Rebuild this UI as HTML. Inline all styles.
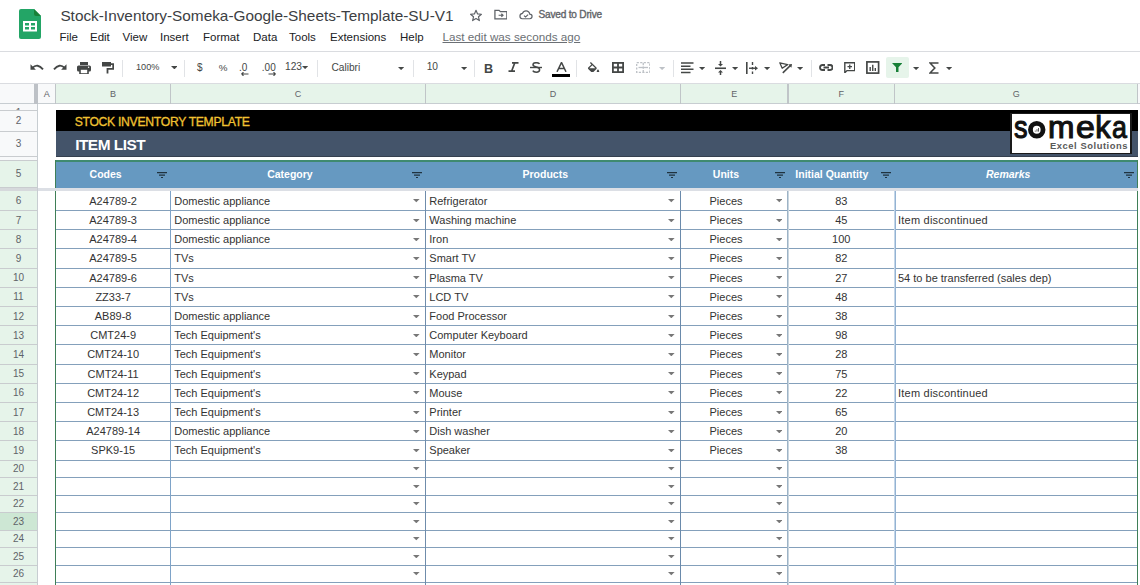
<!DOCTYPE html><html><head><meta charset="utf-8"><style>html,body{margin:0;padding:0;width:1140px;height:585px;overflow:hidden;background:#fff;font-family:"Liberation Sans", sans-serif;}</style></head><body>
<svg style="position:absolute;left:19px;top:9px" width="22" height="30" viewBox="0 0 22 30">
<path d="M2 0 H15 L22 7 V28 Q22 30 20 30 H2 Q0 30 0 28 V2 Q0 0 2 0Z" fill="#23a566"/>
<path d="M15 0 L22 7 H17 Q15 7 15 5Z" fill="#188038"/>
<rect x="4" y="12" width="14" height="10.5" fill="#fff"/>
<rect x="6" y="14" width="4" height="2.5" fill="#23a566"/><rect x="12" y="14" width="4" height="2.5" fill="#23a566"/>
<rect x="6" y="18" width="4" height="2.5" fill="#23a566"/><rect x="12" y="18" width="4" height="2.5" fill="#23a566"/>
</svg>
<div style="position:absolute;left:60.40px;top:7.10px;font-size:15.35px;line-height:17.65px;color:#3c4043;font-weight:normal;font-style:normal;white-space:pre;">Stock-Inventory-Someka-Google-Sheets-Template-SU-V1</div>
<svg style="position:absolute;left:469px;top:9px" width="14" height="13" viewBox="0 0 24 24"><path d="M12 2.5l2.9 6.6 7.1.6-5.4 4.7 1.6 7-6.2-3.7-6.2 3.7 1.6-7L2 9.7l7.1-.6z" fill="none" stroke="#5f6368" stroke-width="2.2" stroke-linejoin="round"/></svg>
<svg style="position:absolute;left:493.6px;top:9.4px" width="13.8" height="10.7" viewBox="0 0 15 12" preserveAspectRatio="none"><path d="M1 1.5 H5.5 L7 3 H14 V11 H1Z" fill="none" stroke="#5f6368" stroke-width="1.4"/><path d="M5 7 H9.5 M8 5.3 L9.8 7 L8 8.7" fill="none" stroke="#5f6368" stroke-width="1.3"/></svg>
<svg style="position:absolute;left:519px;top:10.3px" width="14" height="9.6" viewBox="0 0 15 11" preserveAspectRatio="none"><path d="M3.5 10 H11.5 Q14 10 14 7.3 Q14 5 11.5 4.8 Q10.8 1 7.5 1 Q4.8 1 3.8 3.8 Q1 4.1 1 6.9 Q1 10 3.5 10Z" fill="none" stroke="#5f6368" stroke-width="1.3"/><path d="M5.3 6.5 L7 8 L9.8 5.2" fill="none" stroke="#5f6368" stroke-width="1.2"/></svg>
<div style="position:absolute;left:538.50px;top:8.95px;font-size:10.1px;line-height:11.61px;color:#5f6368;font-weight:normal;font-style:normal;white-space:pre;-webkit-text-stroke:0.35px #5f6368;letter-spacing:-0.2px;">Saved to Drive</div>
<div style="position:absolute;left:59.40px;top:31.29px;font-size:11.5px;line-height:13.22px;color:#202124;font-weight:normal;font-style:normal;white-space:pre;">File</div>
<div style="position:absolute;left:90.00px;top:31.29px;font-size:11.5px;line-height:13.22px;color:#202124;font-weight:normal;font-style:normal;white-space:pre;">Edit</div>
<div style="position:absolute;left:122.50px;top:31.29px;font-size:11.5px;line-height:13.22px;color:#202124;font-weight:normal;font-style:normal;white-space:pre;">View</div>
<div style="position:absolute;left:160.00px;top:31.29px;font-size:11.5px;line-height:13.22px;color:#202124;font-weight:normal;font-style:normal;white-space:pre;">Insert</div>
<div style="position:absolute;left:203.00px;top:31.29px;font-size:11.5px;line-height:13.22px;color:#202124;font-weight:normal;font-style:normal;white-space:pre;">Format</div>
<div style="position:absolute;left:253.00px;top:31.29px;font-size:11.5px;line-height:13.22px;color:#202124;font-weight:normal;font-style:normal;white-space:pre;">Data</div>
<div style="position:absolute;left:289.00px;top:31.29px;font-size:11.5px;line-height:13.22px;color:#202124;font-weight:normal;font-style:normal;white-space:pre;">Tools</div>
<div style="position:absolute;left:330.00px;top:31.29px;font-size:11.5px;line-height:13.22px;color:#202124;font-weight:normal;font-style:normal;white-space:pre;">Extensions</div>
<div style="position:absolute;left:400.00px;top:31.29px;font-size:11.5px;line-height:13.22px;color:#202124;font-weight:normal;font-style:normal;white-space:pre;">Help</div>
<div style="position:absolute;left:442.50px;top:30.21px;font-size:11.7px;line-height:13.45px;color:#6b6f74;font-weight:normal;font-style:normal;white-space:pre;text-decoration:underline;">Last edit was seconds ago</div>
<div style="position:absolute;left:0.00px;top:50.50px;width:1140.00px;height:1.00px;background:#dadce0"></div>
<svg style="position:absolute;left:29.5px;top:61px" width="14" height="12" viewBox="0 0 14 12"><path d="M0.5 3.3 V8.7 H5.9 Z" fill="#444746"/><path d="M2.3 6.9 Q7.5 1.8 13 8.3" fill="none" stroke="#444746" stroke-width="1.9"/></svg>
<svg style="position:absolute;left:53.3px;top:61px" width="14" height="12" viewBox="0 0 14 12"><path d="M13.5 3.3 V8.7 H8.1 Z" fill="#444746"/><path d="M11.7 6.9 Q6.5 1.8 1 8.3" fill="none" stroke="#444746" stroke-width="1.9"/></svg>
<svg style="position:absolute;left:76.5px;top:61.5px" width="14" height="12" viewBox="0 0 14 12"><rect x="3" y="0" width="8" height="3" fill="#444746"/><rect x="0" y="3.5" width="14" height="6" rx="1.5" fill="#444746"/><rect x="3" y="7" width="8" height="5" fill="#fff" stroke="#444746" stroke-width="1.6"/><circle cx="11.6" cy="5.3" r=".7" fill="#fff"/></svg>
<svg style="position:absolute;left:101.5px;top:62px" width="12" height="12" viewBox="0 0 12 12"><rect x="0" y="0" width="9" height="4.5" fill="#444746"/><path d="M9 2.2 H11.2 V6.8 H5.5 V11.5" fill="none" stroke="#444746" stroke-width="1.8"/></svg>
<div style="position:absolute;left:122.00px;top:60.00px;width:1.00px;height:16.50px;background:#e1e3e6"></div>
<div style="position:absolute;left:135.80px;top:60.94px;font-size:9.9px;line-height:11.38px;color:#444746;font-weight:normal;font-style:normal;white-space:pre;transform:scaleX(0.93);transform-origin:left;">100%</div>
<svg style="position:absolute;left:170.6px;top:66px" width="6.8" height="3.40" viewBox="0 0 10 5"><path d="M0 0 H10 L5 5Z" fill="#444746"/></svg>
<div style="position:absolute;left:184.10px;top:60.00px;width:1.00px;height:16.50px;background:#e1e3e6"></div>
<div style="position:absolute;left:197.00px;top:61.74px;font-size:10px;line-height:11.50px;color:#444746;font-weight:normal;font-style:normal;white-space:pre;">$</div>
<div style="position:absolute;left:218.80px;top:61.73px;font-size:9.8px;line-height:11.27px;color:#444746;font-weight:normal;font-style:normal;white-space:pre;">%</div>
<div style="position:absolute;left:239.00px;top:61.54px;font-size:10px;line-height:11.50px;color:#444746;font-weight:normal;font-style:normal;white-space:pre;">.0</div>
<svg style="position:absolute;left:241px;top:71.5px" width="8" height="4" viewBox="0 0 8 4"><path d="M0.5 2 H7.5 M0.5 2 L2.5 0.3 M0.5 2 L2.5 3.7" fill="none" stroke="#444746" stroke-width="1.2"/></svg>
<div style="position:absolute;left:261.80px;top:61.54px;font-size:10px;line-height:11.50px;color:#444746;font-weight:normal;font-style:normal;white-space:pre;">.00</div>
<svg style="position:absolute;left:268px;top:71.5px" width="8" height="4" viewBox="0 0 8 4"><path d="M0.5 2 H7.5 M7.5 2 L5.5 0.3 M7.5 2 L5.5 3.7" fill="none" stroke="#444746" stroke-width="1.2"/></svg>
<div style="position:absolute;left:285.00px;top:61.46px;font-size:10.2px;line-height:11.73px;color:#444746;font-weight:normal;font-style:normal;white-space:pre;">123</div>
<svg style="position:absolute;left:302px;top:66px" width="6.2" height="3.10" viewBox="0 0 10 5"><path d="M0 0 H10 L5 5Z" fill="#444746"/></svg>
<div style="position:absolute;left:317.00px;top:60.00px;width:1.00px;height:16.50px;background:#e1e3e6"></div>
<div style="position:absolute;left:331.40px;top:61.76px;font-size:10.2px;line-height:11.73px;color:#444746;font-weight:normal;font-style:normal;white-space:pre;">Calibri</div>
<svg style="position:absolute;left:398px;top:67px" width="6.2" height="3.10" viewBox="0 0 10 5"><path d="M0 0 H10 L5 5Z" fill="#444746"/></svg>
<div style="position:absolute;left:412.50px;top:60.00px;width:1.00px;height:16.50px;background:#e1e3e6"></div>
<div style="position:absolute;left:426.70px;top:61.26px;font-size:10.2px;line-height:11.73px;color:#444746;font-weight:normal;font-style:normal;white-space:pre;">10</div>
<svg style="position:absolute;left:461px;top:67px" width="6.2" height="3.10" viewBox="0 0 10 5"><path d="M0 0 H10 L5 5Z" fill="#444746"/></svg>
<div style="position:absolute;left:474.00px;top:60.00px;width:1.00px;height:16.50px;background:#e1e3e6"></div>
<div style="position:absolute;left:484.00px;top:61.79px;font-size:12.6px;line-height:14.49px;color:#444746;font-weight:bold;font-style:normal;white-space:pre;">B</div>
<svg style="position:absolute;left:507.5px;top:62px" width="11" height="10" viewBox="0 0 11 10"><path d="M4 0.8 H10.5 M0.5 9.2 H7 M6.8 0.8 L3.6 9.2" fill="none" stroke="#444746" stroke-width="1.7"/></svg>
<svg style="position:absolute;left:529.5px;top:61.5px" width="12.5" height="11" viewBox="0 0 12.5 11"><path d="M0 5.5 H12.5" stroke="#444746" stroke-width="1.4"/><path d="M9.5 2 Q8.8 0.7 6.3 0.7 Q3 0.7 3 2.8 Q3 4.3 6.3 5 Q9.6 5.8 9.6 7.8 Q9.6 10.2 6.3 10.2 Q3.5 10.2 2.8 8.6" fill="none" stroke="#444746" stroke-width="1.5"/></svg>
<svg style="position:absolute;left:555.5px;top:61.5px" width="11" height="10" viewBox="0 0 11 10"><path d="M1 9.8 L5.5 0.5 L10 9.8 M2.8 6.5 H8.2" fill="none" stroke="#444746" stroke-width="1.5"/></svg>
<div style="position:absolute;left:552.00px;top:73.90px;width:17.60px;height:3.50px;background:#000"></div>
<div style="position:absolute;left:576.00px;top:60.00px;width:1.00px;height:16.50px;background:#e1e3e6"></div>
<svg style="position:absolute;left:586.5px;top:61.5px" width="13.5" height="10.8" viewBox="3 0 18.5 17.2"><path d="M16.56 8.94L7.62 0 6.21 1.41l2.38 2.38-5.15 5.15c-.59.59-.59 1.54 0 2.12l5.5 5.5c.29.29.68.44 1.06.44s.77-.15 1.06-.44l5.5-5.5c.59-.58.59-1.53 0-2.12zM5.21 10L10 5.21 14.79 10H5.21zM19 11.5s-2 2.17-2 3.5c0 1.1.9 2 2 2s2-.9 2-2c0-1.33-2-3.5-2-3.5z" fill="#444746"/></svg>
<svg style="position:absolute;left:612px;top:62px" width="12" height="11" viewBox="0 0 12 11"><rect x="0.9" y="0.9" width="10.2" height="9.2" fill="none" stroke="#444746" stroke-width="1.8"/><path d="M6 1 V10 M1 5.5 H11" stroke="#444746" stroke-width="1.8"/></svg>
<svg style="position:absolute;left:635.5px;top:62px" width="14.5" height="11" viewBox="0 0 14.5 11"><g fill="none" stroke="#bdc1c6" stroke-width="1.3" stroke-dasharray="2.2 1.3"><rect x=".7" y=".7" width="13.1" height="9.6"/><path d="M7.25 1 V10"/></g><path d="M2.5 5.5 H12" stroke="#bdc1c6" stroke-width="1.3"/></svg>
<svg style="position:absolute;left:658.5px;top:67px" width="6.2" height="3.10" viewBox="0 0 10 5"><path d="M0 0 H10 L5 5Z" fill="#bdc1c6"/></svg>
<div style="position:absolute;left:672.50px;top:60.00px;width:1.00px;height:16.50px;background:#e1e3e6"></div>
<svg style="position:absolute;left:681px;top:62px" width="12.5" height="11.5" viewBox="0 0 12.5 11.5"><path d="M0 1 H12.5 M0 4.2 H9.5 M0 7.3 H12.5 M0 10.5 H9.5" stroke="#444746" stroke-width="1.6"/></svg>
<svg style="position:absolute;left:698.5px;top:67px" width="6.2" height="3.10" viewBox="0 0 10 5"><path d="M0 0 H10 L5 5Z" fill="#444746"/></svg>
<svg style="position:absolute;left:714.5px;top:60.5px" width="11" height="14.5" viewBox="0 0 11 14.5"><path d="M0 7.25 H11" stroke="#444746" stroke-width="1.6"/><path d="M5.5 0 V4" stroke="#444746" stroke-width="1.5"/><path d="M3 3 H8 L5.5 5.5Z" fill="#444746"/><path d="M5.5 14.5 V10.5" stroke="#444746" stroke-width="1.5"/><path d="M3 11.5 H8 L5.5 9Z" fill="#444746"/></svg>
<svg style="position:absolute;left:731.5px;top:67px" width="6.2" height="3.10" viewBox="0 0 10 5"><path d="M0 0 H10 L5 5Z" fill="#444746"/></svg>
<svg style="position:absolute;left:746px;top:61.5px" width="12.5" height="12.5" viewBox="0 0 12.5 12.5"><path d="M0.8 0 V12.5" stroke="#444746" stroke-width="1.6"/><path d="M6.5 0 V3 M6.5 9.5 V12.5 M6.5 5 V7.5" stroke="#444746" stroke-width="1.4"/><path d="M3 6.25 H10" stroke="#444746" stroke-width="1.4"/><path d="M9 4 L12 6.25 L9 8.5Z" fill="#444746"/></svg>
<svg style="position:absolute;left:763.5px;top:67px" width="6.2" height="3.10" viewBox="0 0 10 5"><path d="M0 0 H10 L5 5Z" fill="#444746"/></svg>
<svg style="position:absolute;left:779px;top:62px" width="13.5" height="11.5" viewBox="0 0 13.5 11.5"><path d="M0.8 0.8 L8.6 2.6 L3.2 6.2 Z" fill="none" stroke="#444746" stroke-width="1.3" stroke-linejoin="round"/><path d="M3.8 10.9 L11.8 3.1" stroke="#444746" stroke-width="1.5"/><path d="M13 1.9 L9.2 2.5 L12.4 5.7Z" fill="#444746"/></svg>
<svg style="position:absolute;left:797px;top:67px" width="6.2" height="3.10" viewBox="0 0 10 5"><path d="M0 0 H10 L5 5Z" fill="#444746"/></svg>
<div style="position:absolute;left:810.50px;top:60.00px;width:1.00px;height:16.50px;background:#e1e3e6"></div>
<svg style="position:absolute;left:818.5px;top:63.7px" width="14.5" height="7" viewBox="0 0 14.5 7"><path d="M6 1 H3.5 Q1 1 1 3.5 Q1 6 3.5 6 H6 M8.5 1 H11 Q13.5 1 13.5 3.5 Q13.5 6 11 6 H8.5 M4.5 3.5 H10" fill="none" stroke="#444746" stroke-width="1.8"/></svg>
<svg style="position:absolute;left:843.5px;top:61.5px" width="11.5" height="11.5" viewBox="0 0 11.5 11.5"><path d="M0.8 10.8 V0.8 H10.7 V8.6 H3 Z" fill="none" stroke="#444746" stroke-width="1.4" stroke-linejoin="miter"/><path d="M5.75 2.4 V6.9 M3.5 4.65 H8" stroke="#444746" stroke-width="1.3"/></svg>
<svg style="position:absolute;left:866px;top:61.2px" width="13.5" height="13" viewBox="0 0 13.5 13"><rect x=".9" y=".9" width="11.7" height="11.2" fill="none" stroke="#444746" stroke-width="1.7"/><path d="M4.2 6 V10 M6.75 3.8 V10 M9.3 7 V10" stroke="#444746" stroke-width="1.4"/></svg>
<div style="position:absolute;left:885.50px;top:56.90px;width:23.30px;height:21.50px;background:#e6f4ea;border-radius:2px"></div>
<svg style="position:absolute;left:891.5px;top:62.8px" width="10.5" height="9.6" viewBox="0 0 10.5 9.6"><path d="M0 0 H10.5 L6.5 4.2 V9.6 H4 V4.2Z" fill="#188038"/></svg>
<svg style="position:absolute;left:913px;top:67px" width="6.2" height="3.10" viewBox="0 0 10 5"><path d="M0 0 H10 L5 5Z" fill="#444746"/></svg>
<svg style="position:absolute;left:929px;top:61.5px" width="10" height="12" viewBox="0 0 10 12"><path d="M9.5 1 H1 L5.8 6 L1 11 H9.5" fill="none" stroke="#444746" stroke-width="1.6" stroke-linejoin="miter"/></svg>
<svg style="position:absolute;left:945.5px;top:67px" width="6.2" height="3.10" viewBox="0 0 10 5"><path d="M0 0 H10 L5 5Z" fill="#444746"/></svg>
<div style="position:absolute;left:0.00px;top:83.50px;width:1140.00px;height:20.20px;background:#e6f4ea"></div>
<div style="position:absolute;left:0.00px;top:83.50px;width:37.70px;height:20.20px;background:#f8f9fa"></div>
<div style="position:absolute;left:37.70px;top:83.50px;width:17.90px;height:20.20px;background:#f8f9fa"></div>
<div style="position:absolute;left:1138.40px;top:83.50px;width:1.60px;height:20.20px;background:#f8f9fa"></div>
<div style="position:absolute;left:0.00px;top:83.00px;width:1140.00px;height:1.00px;background:#dadce0"></div>
<div style="position:absolute;left:0.00px;top:102.70px;width:1140.00px;height:1.50px;background:#c7cdd1"></div>
<div style="position:absolute;left:34.20px;top:83.50px;width:3.50px;height:20.20px;background:#bdc1c6"></div>
<div style="position:absolute;left:55.00px;top:83.50px;width:1.20px;height:20.20px;background:#c0c5c8"></div>
<div style="position:absolute;left:-453.35px;width:1000px;text-align:center;top:88.85px;font-size:9px;line-height:10.35px;color:#5f6368;font-weight:normal;font-style:normal;white-space:pre;">A</div>
<div style="position:absolute;left:169.80px;top:83.50px;width:1.20px;height:20.20px;background:#c0c5c8"></div>
<div style="position:absolute;left:-387.00px;width:1000px;text-align:center;top:88.85px;font-size:9px;line-height:10.35px;color:#5f6368;font-weight:normal;font-style:normal;white-space:pre;">B</div>
<div style="position:absolute;left:424.90px;top:83.50px;width:1.20px;height:20.20px;background:#c0c5c8"></div>
<div style="position:absolute;left:-202.05px;width:1000px;text-align:center;top:88.85px;font-size:9px;line-height:10.35px;color:#5f6368;font-weight:normal;font-style:normal;white-space:pre;">C</div>
<div style="position:absolute;left:679.80px;top:83.50px;width:1.20px;height:20.20px;background:#c0c5c8"></div>
<div style="position:absolute;left:52.95px;width:1000px;text-align:center;top:88.85px;font-size:9px;line-height:10.35px;color:#5f6368;font-weight:normal;font-style:normal;white-space:pre;">D</div>
<div style="position:absolute;left:787.40px;top:83.50px;width:1.20px;height:20.20px;background:#c0c5c8"></div>
<div style="position:absolute;left:234.20px;width:1000px;text-align:center;top:88.85px;font-size:9px;line-height:10.35px;color:#5f6368;font-weight:normal;font-style:normal;white-space:pre;">E</div>
<div style="position:absolute;left:894.00px;top:83.50px;width:1.20px;height:20.20px;background:#c0c5c8"></div>
<div style="position:absolute;left:341.30px;width:1000px;text-align:center;top:88.85px;font-size:9px;line-height:10.35px;color:#5f6368;font-weight:normal;font-style:normal;white-space:pre;">F</div>
<div style="position:absolute;left:1137.20px;top:83.50px;width:1.20px;height:20.20px;background:#c0c5c8"></div>
<div style="position:absolute;left:516.20px;width:1000px;text-align:center;top:88.85px;font-size:9px;line-height:10.35px;color:#5f6368;font-weight:normal;font-style:normal;white-space:pre;">G</div>
<div style="position:absolute;left:0.00px;top:103.70px;width:37.20px;height:6.50px;background:#f8f9fa"></div>
<div style="position:absolute;left:0;top:103.70px;width:37px;height:6.50px;overflow:hidden"><div style="position:absolute;left:0;width:37px;text-align:center;top:3.75px;font-size:10px;line-height:11.5px;color:#5f6368">1</div></div>
<div style="position:absolute;left:0.00px;top:110.20px;width:37.20px;height:20.80px;background:#f8f9fa"></div>
<div style="position:absolute;left:-481.50px;width:1000px;text-align:center;top:115.14px;font-size:10px;line-height:11.50px;color:#5f6368;font-weight:normal;font-style:normal;white-space:pre;">2</div>
<div style="position:absolute;left:0.00px;top:131.00px;width:37.20px;height:25.70px;background:#f8f9fa"></div>
<div style="position:absolute;left:-481.50px;width:1000px;text-align:center;top:138.39px;font-size:10px;line-height:11.50px;color:#5f6368;font-weight:normal;font-style:normal;white-space:pre;">3</div>
<div style="position:absolute;left:0.00px;top:156.70px;width:37.20px;height:3.30px;background:#f8f9fa"></div>
<div style="position:absolute;left:0.00px;top:160.00px;width:37.20px;height:27.80px;background:#e6f4ea"></div>
<div style="position:absolute;left:-481.50px;width:1000px;text-align:center;top:168.44px;font-size:10px;line-height:11.50px;color:#5f6368;font-weight:normal;font-style:normal;white-space:pre;">5</div>
<div style="position:absolute;left:0.00px;top:191.20px;width:37.20px;height:19.20px;background:#e6f4ea"></div>
<div style="position:absolute;left:-481.50px;width:1000px;text-align:center;top:195.34px;font-size:10px;line-height:11.50px;color:#5f6368;font-weight:normal;font-style:normal;white-space:pre;">6</div>
<div style="position:absolute;left:0.00px;top:210.40px;width:37.20px;height:19.20px;background:#e6f4ea"></div>
<div style="position:absolute;left:-481.50px;width:1000px;text-align:center;top:214.54px;font-size:10px;line-height:11.50px;color:#5f6368;font-weight:normal;font-style:normal;white-space:pre;">7</div>
<div style="position:absolute;left:0.00px;top:229.60px;width:37.20px;height:19.20px;background:#e6f4ea"></div>
<div style="position:absolute;left:-481.50px;width:1000px;text-align:center;top:233.74px;font-size:10px;line-height:11.50px;color:#5f6368;font-weight:normal;font-style:normal;white-space:pre;">8</div>
<div style="position:absolute;left:0.00px;top:248.80px;width:37.20px;height:19.20px;background:#e6f4ea"></div>
<div style="position:absolute;left:-481.50px;width:1000px;text-align:center;top:252.94px;font-size:10px;line-height:11.50px;color:#5f6368;font-weight:normal;font-style:normal;white-space:pre;">9</div>
<div style="position:absolute;left:0.00px;top:268.00px;width:37.20px;height:19.20px;background:#e6f4ea"></div>
<div style="position:absolute;left:-481.50px;width:1000px;text-align:center;top:272.15px;font-size:10px;line-height:11.50px;color:#5f6368;font-weight:normal;font-style:normal;white-space:pre;">10</div>
<div style="position:absolute;left:0.00px;top:287.20px;width:37.20px;height:19.20px;background:#e6f4ea"></div>
<div style="position:absolute;left:-481.50px;width:1000px;text-align:center;top:291.34px;font-size:10px;line-height:11.50px;color:#5f6368;font-weight:normal;font-style:normal;white-space:pre;">11</div>
<div style="position:absolute;left:0.00px;top:306.40px;width:37.20px;height:19.20px;background:#e6f4ea"></div>
<div style="position:absolute;left:-481.50px;width:1000px;text-align:center;top:310.55px;font-size:10px;line-height:11.50px;color:#5f6368;font-weight:normal;font-style:normal;white-space:pre;">12</div>
<div style="position:absolute;left:0.00px;top:325.60px;width:37.20px;height:19.20px;background:#e6f4ea"></div>
<div style="position:absolute;left:-481.50px;width:1000px;text-align:center;top:329.75px;font-size:10px;line-height:11.50px;color:#5f6368;font-weight:normal;font-style:normal;white-space:pre;">13</div>
<div style="position:absolute;left:0.00px;top:344.80px;width:37.20px;height:19.20px;background:#e6f4ea"></div>
<div style="position:absolute;left:-481.50px;width:1000px;text-align:center;top:348.94px;font-size:10px;line-height:11.50px;color:#5f6368;font-weight:normal;font-style:normal;white-space:pre;">14</div>
<div style="position:absolute;left:0.00px;top:364.00px;width:37.20px;height:19.20px;background:#e6f4ea"></div>
<div style="position:absolute;left:-481.50px;width:1000px;text-align:center;top:368.15px;font-size:10px;line-height:11.50px;color:#5f6368;font-weight:normal;font-style:normal;white-space:pre;">15</div>
<div style="position:absolute;left:0.00px;top:383.20px;width:37.20px;height:19.20px;background:#e6f4ea"></div>
<div style="position:absolute;left:-481.50px;width:1000px;text-align:center;top:387.34px;font-size:10px;line-height:11.50px;color:#5f6368;font-weight:normal;font-style:normal;white-space:pre;">16</div>
<div style="position:absolute;left:0.00px;top:402.40px;width:37.20px;height:19.20px;background:#e6f4ea"></div>
<div style="position:absolute;left:-481.50px;width:1000px;text-align:center;top:406.55px;font-size:10px;line-height:11.50px;color:#5f6368;font-weight:normal;font-style:normal;white-space:pre;">17</div>
<div style="position:absolute;left:0.00px;top:421.60px;width:37.20px;height:19.20px;background:#e6f4ea"></div>
<div style="position:absolute;left:-481.50px;width:1000px;text-align:center;top:425.74px;font-size:10px;line-height:11.50px;color:#5f6368;font-weight:normal;font-style:normal;white-space:pre;">18</div>
<div style="position:absolute;left:0.00px;top:440.80px;width:37.20px;height:19.20px;background:#e6f4ea"></div>
<div style="position:absolute;left:-481.50px;width:1000px;text-align:center;top:444.94px;font-size:10px;line-height:11.50px;color:#5f6368;font-weight:normal;font-style:normal;white-space:pre;">19</div>
<div style="position:absolute;left:0.00px;top:460.00px;width:37.20px;height:17.50px;background:#e6f4ea"></div>
<div style="position:absolute;left:-481.50px;width:1000px;text-align:center;top:463.30px;font-size:10px;line-height:11.50px;color:#5f6368;font-weight:normal;font-style:normal;white-space:pre;">20</div>
<div style="position:absolute;left:0.00px;top:477.50px;width:37.20px;height:17.50px;background:#e6f4ea"></div>
<div style="position:absolute;left:-481.50px;width:1000px;text-align:center;top:480.80px;font-size:10px;line-height:11.50px;color:#5f6368;font-weight:normal;font-style:normal;white-space:pre;">21</div>
<div style="position:absolute;left:0.00px;top:495.00px;width:37.20px;height:17.50px;background:#e6f4ea"></div>
<div style="position:absolute;left:-481.50px;width:1000px;text-align:center;top:498.30px;font-size:10px;line-height:11.50px;color:#5f6368;font-weight:normal;font-style:normal;white-space:pre;">22</div>
<div style="position:absolute;left:0.00px;top:512.50px;width:37.20px;height:17.50px;background:#cde7d4"></div>
<div style="position:absolute;left:-481.50px;width:1000px;text-align:center;top:515.80px;font-size:10px;line-height:11.50px;color:#5f6368;font-weight:normal;font-style:normal;white-space:pre;">23</div>
<div style="position:absolute;left:0.00px;top:530.00px;width:37.20px;height:17.50px;background:#e6f4ea"></div>
<div style="position:absolute;left:-481.50px;width:1000px;text-align:center;top:533.30px;font-size:10px;line-height:11.50px;color:#5f6368;font-weight:normal;font-style:normal;white-space:pre;">24</div>
<div style="position:absolute;left:0.00px;top:547.50px;width:37.20px;height:17.50px;background:#e6f4ea"></div>
<div style="position:absolute;left:-481.50px;width:1000px;text-align:center;top:550.80px;font-size:10px;line-height:11.50px;color:#5f6368;font-weight:normal;font-style:normal;white-space:pre;">25</div>
<div style="position:absolute;left:0.00px;top:565.00px;width:37.20px;height:17.50px;background:#e6f4ea"></div>
<div style="position:absolute;left:-481.50px;width:1000px;text-align:center;top:568.30px;font-size:10px;line-height:11.50px;color:#5f6368;font-weight:normal;font-style:normal;white-space:pre;">26</div>
<div style="position:absolute;left:0.00px;top:582.50px;width:37.20px;height:2.50px;background:#e6f4ea"></div>
<div style="position:absolute;left:0.00px;top:109.70px;width:37.20px;height:1.00px;background:#c9cccf"></div>
<div style="position:absolute;left:0.00px;top:130.50px;width:37.20px;height:1.00px;background:#c9cccf"></div>
<div style="position:absolute;left:0.00px;top:156.20px;width:37.20px;height:1.00px;background:#c9cccf"></div>
<div style="position:absolute;left:0.00px;top:159.50px;width:37.20px;height:1.00px;background:#c9cccf"></div>
<div style="position:absolute;left:0.00px;top:187.30px;width:37.20px;height:1.00px;background:#c9cccf"></div>
<div style="position:absolute;left:0.00px;top:209.90px;width:37.20px;height:1.00px;background:#c9cccf"></div>
<div style="position:absolute;left:0.00px;top:229.10px;width:37.20px;height:1.00px;background:#c9cccf"></div>
<div style="position:absolute;left:0.00px;top:248.30px;width:37.20px;height:1.00px;background:#c9cccf"></div>
<div style="position:absolute;left:0.00px;top:267.50px;width:37.20px;height:1.00px;background:#c9cccf"></div>
<div style="position:absolute;left:0.00px;top:286.70px;width:37.20px;height:1.00px;background:#c9cccf"></div>
<div style="position:absolute;left:0.00px;top:305.90px;width:37.20px;height:1.00px;background:#c9cccf"></div>
<div style="position:absolute;left:0.00px;top:325.10px;width:37.20px;height:1.00px;background:#c9cccf"></div>
<div style="position:absolute;left:0.00px;top:344.30px;width:37.20px;height:1.00px;background:#c9cccf"></div>
<div style="position:absolute;left:0.00px;top:363.50px;width:37.20px;height:1.00px;background:#c9cccf"></div>
<div style="position:absolute;left:0.00px;top:382.70px;width:37.20px;height:1.00px;background:#c9cccf"></div>
<div style="position:absolute;left:0.00px;top:401.90px;width:37.20px;height:1.00px;background:#c9cccf"></div>
<div style="position:absolute;left:0.00px;top:421.10px;width:37.20px;height:1.00px;background:#c9cccf"></div>
<div style="position:absolute;left:0.00px;top:440.30px;width:37.20px;height:1.00px;background:#c9cccf"></div>
<div style="position:absolute;left:0.00px;top:459.50px;width:37.20px;height:1.00px;background:#c9cccf"></div>
<div style="position:absolute;left:0.00px;top:477.00px;width:37.20px;height:1.00px;background:#c9cccf"></div>
<div style="position:absolute;left:0.00px;top:494.50px;width:37.20px;height:1.00px;background:#c9cccf"></div>
<div style="position:absolute;left:0.00px;top:512.00px;width:37.20px;height:1.00px;background:#c9cccf"></div>
<div style="position:absolute;left:0.00px;top:529.50px;width:37.20px;height:1.00px;background:#c9cccf"></div>
<div style="position:absolute;left:0.00px;top:547.00px;width:37.20px;height:1.00px;background:#c9cccf"></div>
<div style="position:absolute;left:0.00px;top:564.50px;width:37.20px;height:1.00px;background:#c9cccf"></div>
<div style="position:absolute;left:0.00px;top:582.00px;width:37.20px;height:1.00px;background:#c9cccf"></div>
<div style="position:absolute;left:0.00px;top:599.50px;width:37.20px;height:1.00px;background:#c9cccf"></div>
<div style="position:absolute;left:0.00px;top:187.80px;width:1138.00px;height:3.40px;background:#d6d9dc"></div>
<div style="position:absolute;left:37.20px;top:103.70px;width:1.00px;height:481.30px;background:#c7cdd1"></div>
<div style="position:absolute;left:55.60px;top:110.20px;width:1082.50px;height:20.80px;background:#000"></div>
<div style="position:absolute;left:55.60px;top:131.00px;width:1082.50px;height:25.70px;background:#44546a"></div>
<div style="position:absolute;left:55.60px;top:155.90px;width:1082.50px;height:0.80px;background:#36404f"></div>
<div style="position:absolute;left:74.70px;top:114.55px;font-size:12.2px;line-height:14.03px;color:#f0c232;font-weight:normal;font-style:normal;white-space:pre;letter-spacing:-0.3px;-webkit-text-stroke:0.3px #f0c232;">STOCK INVENTORY TEMPLATE</div>
<div style="position:absolute;left:75.20px;top:136.16px;font-size:15.4px;line-height:17.71px;color:#ffffff;font-weight:bold;font-style:normal;white-space:pre;letter-spacing:-0.5px;">ITEM LIST</div>
<div style="position:absolute;left:1010.30px;top:112.60px;width:121.30px;height:41.40px;background:#1a1a1a"></div>
<div style="position:absolute;left:1011.50px;top:113.80px;width:118.90px;height:38.90px;background:#fff"></div>
<div style="position:absolute;left:1013.80px;top:109.81px;font-size:30.8px;line-height:35.42px;color:#111;font-weight:normal;font-style:normal;white-space:pre;-webkit-text-stroke:1.1px #111;transform:scaleX(0.88);transform-origin:left;">s</div>
<div style="position:absolute;left:1047.50px;top:109.81px;font-size:30.8px;line-height:35.42px;color:#111;font-weight:normal;font-style:normal;white-space:pre;-webkit-text-stroke:1.1px #111;transform:scaleX(1.03);transform-origin:left;">m</div>
<div style="position:absolute;left:1076.10px;top:109.81px;font-size:30.8px;line-height:35.42px;color:#111;font-weight:normal;font-style:normal;white-space:pre;-webkit-text-stroke:1.1px #111;transform:scaleX(1.1);transform-origin:left;">e</div>
<div style="position:absolute;left:1095.30px;top:109.81px;font-size:30.8px;line-height:35.42px;color:#111;font-weight:normal;font-style:normal;white-space:pre;-webkit-text-stroke:1.1px #111;transform:scaleX(1.0);transform-origin:left;">k</div>
<div style="position:absolute;left:1112.20px;top:109.81px;font-size:30.8px;line-height:35.42px;color:#111;font-weight:normal;font-style:normal;white-space:pre;-webkit-text-stroke:1.1px #111;transform:scaleX(0.87);transform-origin:left;">a</div>
<svg style="position:absolute;left:1028px;top:121.3px" width="17.5" height="17.5" viewBox="0 0 17.5 17.5"><circle cx="8.75" cy="8.75" r="6.3" fill="none" stroke="#111" stroke-width="4.8"/><path d="M7.3 10.6 V9.6 M9 10.6 V8.2 M10.5 10.6 V7" stroke="#333" stroke-width="0.8"/></svg>
<div style="position:absolute;left:1050.00px;top:141.09px;font-size:9.4px;line-height:10.81px;color:#595959;font-weight:bold;font-style:normal;white-space:pre;letter-spacing:0.55px;">Excel Solutions</div>
<div style="position:absolute;left:55.60px;top:160.00px;width:1082.20px;height:27.80px;background:#6699c1"></div>
<div style="position:absolute;left:55.60px;top:160.00px;width:1082.20px;height:1.60px;background:#3f8a6f"></div>
<div style="position:absolute;left:89.60px;top:167.99px;font-size:10.5px;line-height:12.07px;color:#fff;font-weight:bold;font-style:normal;white-space:pre;">Codes</div>
<div style="position:absolute;left:267.20px;top:167.99px;font-size:10.5px;line-height:12.07px;color:#fff;font-weight:bold;font-style:normal;white-space:pre;">Category</div>
<div style="position:absolute;left:522.50px;top:167.99px;font-size:10.5px;line-height:12.07px;color:#fff;font-weight:bold;font-style:normal;white-space:pre;">Products</div>
<div style="position:absolute;left:712.80px;top:167.99px;font-size:10.5px;line-height:12.07px;color:#fff;font-weight:bold;font-style:normal;white-space:pre;">Units</div>
<div style="position:absolute;left:795.30px;top:167.99px;font-size:10.5px;line-height:12.07px;color:#fff;font-weight:bold;font-style:normal;white-space:pre;">Initial Quantity</div>
<div style="position:absolute;left:986.00px;top:167.99px;font-size:10.5px;line-height:12.07px;color:#fff;font-weight:bold;font-style:italic;white-space:pre;">Remarks</div>
<svg style="position:absolute;left:157.0px;top:171.6px" width="10" height="6.2" viewBox="0 0 10 6.2"><path d="M0 0.6 H10 M2 3.1 H8 M4 5.6 H6" stroke="#20333f" stroke-width="1.1"/></svg>
<svg style="position:absolute;left:412.1px;top:171.6px" width="10" height="6.2" viewBox="0 0 10 6.2"><path d="M0 0.6 H10 M2 3.1 H8 M4 5.6 H6" stroke="#20333f" stroke-width="1.1"/></svg>
<svg style="position:absolute;left:667.0px;top:171.6px" width="10" height="6.2" viewBox="0 0 10 6.2"><path d="M0 0.6 H10 M2 3.1 H8 M4 5.6 H6" stroke="#20333f" stroke-width="1.1"/></svg>
<svg style="position:absolute;left:774.6px;top:171.6px" width="10" height="6.2" viewBox="0 0 10 6.2"><path d="M0 0.6 H10 M2 3.1 H8 M4 5.6 H6" stroke="#20333f" stroke-width="1.1"/></svg>
<svg style="position:absolute;left:881.2px;top:171.6px" width="10" height="6.2" viewBox="0 0 10 6.2"><path d="M0 0.6 H10 M2 3.1 H8 M4 5.6 H6" stroke="#20333f" stroke-width="1.1"/></svg>
<svg style="position:absolute;left:1124.3999999999999px;top:171.6px" width="10" height="6.2" viewBox="0 0 10 6.2"><path d="M0 0.6 H10 M2 3.1 H8 M4 5.6 H6" stroke="#20333f" stroke-width="1.1"/></svg>
<div style="position:absolute;left:55.60px;top:191.20px;width:1082.20px;height:393.80px;background:#fff"></div>
<div style="position:absolute;left:55.60px;top:209.90px;width:1082.20px;height:1.10px;background:#84a0bb"></div>
<div style="position:absolute;left:-386.90px;width:1000px;text-align:center;top:194.84px;font-size:11px;line-height:12.65px;color:#333;font-weight:normal;font-style:normal;white-space:pre;">A24789-2</div>
<div style="position:absolute;left:174.20px;top:194.84px;font-size:11px;line-height:12.65px;color:#333;font-weight:normal;font-style:normal;white-space:pre;">Domestic appliance</div>
<div style="position:absolute;left:429.30px;top:194.84px;font-size:11px;line-height:12.65px;color:#333;font-weight:normal;font-style:normal;white-space:pre;">Refrigerator</div>
<div style="position:absolute;left:226.00px;width:1000px;text-align:center;top:194.84px;font-size:11px;line-height:12.65px;color:#333;font-weight:normal;font-style:normal;white-space:pre;">Pieces</div>
<div style="position:absolute;left:341.30px;width:1000px;text-align:center;top:194.84px;font-size:11px;line-height:12.65px;color:#333;font-weight:normal;font-style:normal;white-space:pre;">83</div>
<svg style="position:absolute;left:413.30px;top:199.40px" width="6.6" height="3.3" viewBox="0 0 10 5"><path d="M0 0 H10 L5 5Z" fill="#777"/></svg>
<svg style="position:absolute;left:668.20px;top:199.40px" width="6.6" height="3.3" viewBox="0 0 10 5"><path d="M0 0 H10 L5 5Z" fill="#777"/></svg>
<svg style="position:absolute;left:775.80px;top:199.40px" width="6.6" height="3.3" viewBox="0 0 10 5"><path d="M0 0 H10 L5 5Z" fill="#777"/></svg>
<div style="position:absolute;left:55.60px;top:229.10px;width:1082.20px;height:1.10px;background:#84a0bb"></div>
<div style="position:absolute;left:-386.90px;width:1000px;text-align:center;top:214.04px;font-size:11px;line-height:12.65px;color:#333;font-weight:normal;font-style:normal;white-space:pre;">A24789-3</div>
<div style="position:absolute;left:174.20px;top:214.04px;font-size:11px;line-height:12.65px;color:#333;font-weight:normal;font-style:normal;white-space:pre;">Domestic appliance</div>
<div style="position:absolute;left:429.30px;top:214.04px;font-size:11px;line-height:12.65px;color:#333;font-weight:normal;font-style:normal;white-space:pre;">Washing machine</div>
<div style="position:absolute;left:226.00px;width:1000px;text-align:center;top:214.04px;font-size:11px;line-height:12.65px;color:#333;font-weight:normal;font-style:normal;white-space:pre;">Pieces</div>
<div style="position:absolute;left:341.30px;width:1000px;text-align:center;top:214.04px;font-size:11px;line-height:12.65px;color:#333;font-weight:normal;font-style:normal;white-space:pre;">45</div>
<div style="position:absolute;left:898.00px;top:214.04px;font-size:11px;line-height:12.65px;color:#333;font-weight:normal;font-style:normal;white-space:pre;letter-spacing:0.22px;">Item discontinued</div>
<svg style="position:absolute;left:413.30px;top:218.60px" width="6.6" height="3.3" viewBox="0 0 10 5"><path d="M0 0 H10 L5 5Z" fill="#777"/></svg>
<svg style="position:absolute;left:668.20px;top:218.60px" width="6.6" height="3.3" viewBox="0 0 10 5"><path d="M0 0 H10 L5 5Z" fill="#777"/></svg>
<svg style="position:absolute;left:775.80px;top:218.60px" width="6.6" height="3.3" viewBox="0 0 10 5"><path d="M0 0 H10 L5 5Z" fill="#777"/></svg>
<div style="position:absolute;left:55.60px;top:248.30px;width:1082.20px;height:1.10px;background:#84a0bb"></div>
<div style="position:absolute;left:-386.90px;width:1000px;text-align:center;top:233.24px;font-size:11px;line-height:12.65px;color:#333;font-weight:normal;font-style:normal;white-space:pre;">A24789-4</div>
<div style="position:absolute;left:174.20px;top:233.24px;font-size:11px;line-height:12.65px;color:#333;font-weight:normal;font-style:normal;white-space:pre;">Domestic appliance</div>
<div style="position:absolute;left:429.30px;top:233.24px;font-size:11px;line-height:12.65px;color:#333;font-weight:normal;font-style:normal;white-space:pre;">Iron</div>
<div style="position:absolute;left:226.00px;width:1000px;text-align:center;top:233.24px;font-size:11px;line-height:12.65px;color:#333;font-weight:normal;font-style:normal;white-space:pre;">Pieces</div>
<div style="position:absolute;left:341.30px;width:1000px;text-align:center;top:233.24px;font-size:11px;line-height:12.65px;color:#333;font-weight:normal;font-style:normal;white-space:pre;">100</div>
<svg style="position:absolute;left:413.30px;top:237.80px" width="6.6" height="3.3" viewBox="0 0 10 5"><path d="M0 0 H10 L5 5Z" fill="#777"/></svg>
<svg style="position:absolute;left:668.20px;top:237.80px" width="6.6" height="3.3" viewBox="0 0 10 5"><path d="M0 0 H10 L5 5Z" fill="#777"/></svg>
<svg style="position:absolute;left:775.80px;top:237.80px" width="6.6" height="3.3" viewBox="0 0 10 5"><path d="M0 0 H10 L5 5Z" fill="#777"/></svg>
<div style="position:absolute;left:55.60px;top:267.50px;width:1082.20px;height:1.10px;background:#84a0bb"></div>
<div style="position:absolute;left:-386.90px;width:1000px;text-align:center;top:252.44px;font-size:11px;line-height:12.65px;color:#333;font-weight:normal;font-style:normal;white-space:pre;">A24789-5</div>
<div style="position:absolute;left:174.20px;top:252.44px;font-size:11px;line-height:12.65px;color:#333;font-weight:normal;font-style:normal;white-space:pre;">TVs</div>
<div style="position:absolute;left:429.30px;top:252.44px;font-size:11px;line-height:12.65px;color:#333;font-weight:normal;font-style:normal;white-space:pre;">Smart TV</div>
<div style="position:absolute;left:226.00px;width:1000px;text-align:center;top:252.44px;font-size:11px;line-height:12.65px;color:#333;font-weight:normal;font-style:normal;white-space:pre;">Pieces</div>
<div style="position:absolute;left:341.30px;width:1000px;text-align:center;top:252.44px;font-size:11px;line-height:12.65px;color:#333;font-weight:normal;font-style:normal;white-space:pre;">82</div>
<svg style="position:absolute;left:413.30px;top:257.00px" width="6.6" height="3.3" viewBox="0 0 10 5"><path d="M0 0 H10 L5 5Z" fill="#777"/></svg>
<svg style="position:absolute;left:668.20px;top:257.00px" width="6.6" height="3.3" viewBox="0 0 10 5"><path d="M0 0 H10 L5 5Z" fill="#777"/></svg>
<svg style="position:absolute;left:775.80px;top:257.00px" width="6.6" height="3.3" viewBox="0 0 10 5"><path d="M0 0 H10 L5 5Z" fill="#777"/></svg>
<div style="position:absolute;left:55.60px;top:286.70px;width:1082.20px;height:1.10px;background:#84a0bb"></div>
<div style="position:absolute;left:-386.90px;width:1000px;text-align:center;top:271.64px;font-size:11px;line-height:12.65px;color:#333;font-weight:normal;font-style:normal;white-space:pre;">A24789-6</div>
<div style="position:absolute;left:174.20px;top:271.64px;font-size:11px;line-height:12.65px;color:#333;font-weight:normal;font-style:normal;white-space:pre;">TVs</div>
<div style="position:absolute;left:429.30px;top:271.64px;font-size:11px;line-height:12.65px;color:#333;font-weight:normal;font-style:normal;white-space:pre;">Plasma TV</div>
<div style="position:absolute;left:226.00px;width:1000px;text-align:center;top:271.64px;font-size:11px;line-height:12.65px;color:#333;font-weight:normal;font-style:normal;white-space:pre;">Pieces</div>
<div style="position:absolute;left:341.30px;width:1000px;text-align:center;top:271.64px;font-size:11px;line-height:12.65px;color:#333;font-weight:normal;font-style:normal;white-space:pre;">27</div>
<div style="position:absolute;left:898.00px;top:271.64px;font-size:11px;line-height:12.65px;color:#333;font-weight:normal;font-style:normal;white-space:pre;">54 to be transferred (sales dep)</div>
<svg style="position:absolute;left:413.30px;top:276.20px" width="6.6" height="3.3" viewBox="0 0 10 5"><path d="M0 0 H10 L5 5Z" fill="#777"/></svg>
<svg style="position:absolute;left:668.20px;top:276.20px" width="6.6" height="3.3" viewBox="0 0 10 5"><path d="M0 0 H10 L5 5Z" fill="#777"/></svg>
<svg style="position:absolute;left:775.80px;top:276.20px" width="6.6" height="3.3" viewBox="0 0 10 5"><path d="M0 0 H10 L5 5Z" fill="#777"/></svg>
<div style="position:absolute;left:55.60px;top:305.90px;width:1082.20px;height:1.10px;background:#84a0bb"></div>
<div style="position:absolute;left:-386.90px;width:1000px;text-align:center;top:290.84px;font-size:11px;line-height:12.65px;color:#333;font-weight:normal;font-style:normal;white-space:pre;">ZZ33-7</div>
<div style="position:absolute;left:174.20px;top:290.84px;font-size:11px;line-height:12.65px;color:#333;font-weight:normal;font-style:normal;white-space:pre;">TVs</div>
<div style="position:absolute;left:429.30px;top:290.84px;font-size:11px;line-height:12.65px;color:#333;font-weight:normal;font-style:normal;white-space:pre;">LCD TV</div>
<div style="position:absolute;left:226.00px;width:1000px;text-align:center;top:290.84px;font-size:11px;line-height:12.65px;color:#333;font-weight:normal;font-style:normal;white-space:pre;">Pieces</div>
<div style="position:absolute;left:341.30px;width:1000px;text-align:center;top:290.84px;font-size:11px;line-height:12.65px;color:#333;font-weight:normal;font-style:normal;white-space:pre;">48</div>
<svg style="position:absolute;left:413.30px;top:295.40px" width="6.6" height="3.3" viewBox="0 0 10 5"><path d="M0 0 H10 L5 5Z" fill="#777"/></svg>
<svg style="position:absolute;left:668.20px;top:295.40px" width="6.6" height="3.3" viewBox="0 0 10 5"><path d="M0 0 H10 L5 5Z" fill="#777"/></svg>
<svg style="position:absolute;left:775.80px;top:295.40px" width="6.6" height="3.3" viewBox="0 0 10 5"><path d="M0 0 H10 L5 5Z" fill="#777"/></svg>
<div style="position:absolute;left:55.60px;top:325.10px;width:1082.20px;height:1.10px;background:#84a0bb"></div>
<div style="position:absolute;left:-386.90px;width:1000px;text-align:center;top:310.04px;font-size:11px;line-height:12.65px;color:#333;font-weight:normal;font-style:normal;white-space:pre;">AB89-8</div>
<div style="position:absolute;left:174.20px;top:310.04px;font-size:11px;line-height:12.65px;color:#333;font-weight:normal;font-style:normal;white-space:pre;">Domestic appliance</div>
<div style="position:absolute;left:429.30px;top:310.04px;font-size:11px;line-height:12.65px;color:#333;font-weight:normal;font-style:normal;white-space:pre;">Food Processor</div>
<div style="position:absolute;left:226.00px;width:1000px;text-align:center;top:310.04px;font-size:11px;line-height:12.65px;color:#333;font-weight:normal;font-style:normal;white-space:pre;">Pieces</div>
<div style="position:absolute;left:341.30px;width:1000px;text-align:center;top:310.04px;font-size:11px;line-height:12.65px;color:#333;font-weight:normal;font-style:normal;white-space:pre;">38</div>
<svg style="position:absolute;left:413.30px;top:314.60px" width="6.6" height="3.3" viewBox="0 0 10 5"><path d="M0 0 H10 L5 5Z" fill="#777"/></svg>
<svg style="position:absolute;left:668.20px;top:314.60px" width="6.6" height="3.3" viewBox="0 0 10 5"><path d="M0 0 H10 L5 5Z" fill="#777"/></svg>
<svg style="position:absolute;left:775.80px;top:314.60px" width="6.6" height="3.3" viewBox="0 0 10 5"><path d="M0 0 H10 L5 5Z" fill="#777"/></svg>
<div style="position:absolute;left:55.60px;top:344.30px;width:1082.20px;height:1.10px;background:#84a0bb"></div>
<div style="position:absolute;left:-386.90px;width:1000px;text-align:center;top:329.24px;font-size:11px;line-height:12.65px;color:#333;font-weight:normal;font-style:normal;white-space:pre;">CMT24-9</div>
<div style="position:absolute;left:174.20px;top:329.24px;font-size:11px;line-height:12.65px;color:#333;font-weight:normal;font-style:normal;white-space:pre;">Tech Equipment's</div>
<div style="position:absolute;left:429.30px;top:329.24px;font-size:11px;line-height:12.65px;color:#333;font-weight:normal;font-style:normal;white-space:pre;">Computer Keyboard</div>
<div style="position:absolute;left:226.00px;width:1000px;text-align:center;top:329.24px;font-size:11px;line-height:12.65px;color:#333;font-weight:normal;font-style:normal;white-space:pre;">Pieces</div>
<div style="position:absolute;left:341.30px;width:1000px;text-align:center;top:329.24px;font-size:11px;line-height:12.65px;color:#333;font-weight:normal;font-style:normal;white-space:pre;">98</div>
<svg style="position:absolute;left:413.30px;top:333.80px" width="6.6" height="3.3" viewBox="0 0 10 5"><path d="M0 0 H10 L5 5Z" fill="#777"/></svg>
<svg style="position:absolute;left:668.20px;top:333.80px" width="6.6" height="3.3" viewBox="0 0 10 5"><path d="M0 0 H10 L5 5Z" fill="#777"/></svg>
<svg style="position:absolute;left:775.80px;top:333.80px" width="6.6" height="3.3" viewBox="0 0 10 5"><path d="M0 0 H10 L5 5Z" fill="#777"/></svg>
<div style="position:absolute;left:55.60px;top:363.50px;width:1082.20px;height:1.10px;background:#84a0bb"></div>
<div style="position:absolute;left:-386.90px;width:1000px;text-align:center;top:348.44px;font-size:11px;line-height:12.65px;color:#333;font-weight:normal;font-style:normal;white-space:pre;">CMT24-10</div>
<div style="position:absolute;left:174.20px;top:348.44px;font-size:11px;line-height:12.65px;color:#333;font-weight:normal;font-style:normal;white-space:pre;">Tech Equipment's</div>
<div style="position:absolute;left:429.30px;top:348.44px;font-size:11px;line-height:12.65px;color:#333;font-weight:normal;font-style:normal;white-space:pre;">Monitor</div>
<div style="position:absolute;left:226.00px;width:1000px;text-align:center;top:348.44px;font-size:11px;line-height:12.65px;color:#333;font-weight:normal;font-style:normal;white-space:pre;">Pieces</div>
<div style="position:absolute;left:341.30px;width:1000px;text-align:center;top:348.44px;font-size:11px;line-height:12.65px;color:#333;font-weight:normal;font-style:normal;white-space:pre;">28</div>
<svg style="position:absolute;left:413.30px;top:353.00px" width="6.6" height="3.3" viewBox="0 0 10 5"><path d="M0 0 H10 L5 5Z" fill="#777"/></svg>
<svg style="position:absolute;left:668.20px;top:353.00px" width="6.6" height="3.3" viewBox="0 0 10 5"><path d="M0 0 H10 L5 5Z" fill="#777"/></svg>
<svg style="position:absolute;left:775.80px;top:353.00px" width="6.6" height="3.3" viewBox="0 0 10 5"><path d="M0 0 H10 L5 5Z" fill="#777"/></svg>
<div style="position:absolute;left:55.60px;top:382.70px;width:1082.20px;height:1.10px;background:#84a0bb"></div>
<div style="position:absolute;left:-386.90px;width:1000px;text-align:center;top:367.64px;font-size:11px;line-height:12.65px;color:#333;font-weight:normal;font-style:normal;white-space:pre;">CMT24-11</div>
<div style="position:absolute;left:174.20px;top:367.64px;font-size:11px;line-height:12.65px;color:#333;font-weight:normal;font-style:normal;white-space:pre;">Tech Equipment's</div>
<div style="position:absolute;left:429.30px;top:367.64px;font-size:11px;line-height:12.65px;color:#333;font-weight:normal;font-style:normal;white-space:pre;">Keypad</div>
<div style="position:absolute;left:226.00px;width:1000px;text-align:center;top:367.64px;font-size:11px;line-height:12.65px;color:#333;font-weight:normal;font-style:normal;white-space:pre;">Pieces</div>
<div style="position:absolute;left:341.30px;width:1000px;text-align:center;top:367.64px;font-size:11px;line-height:12.65px;color:#333;font-weight:normal;font-style:normal;white-space:pre;">75</div>
<svg style="position:absolute;left:413.30px;top:372.20px" width="6.6" height="3.3" viewBox="0 0 10 5"><path d="M0 0 H10 L5 5Z" fill="#777"/></svg>
<svg style="position:absolute;left:668.20px;top:372.20px" width="6.6" height="3.3" viewBox="0 0 10 5"><path d="M0 0 H10 L5 5Z" fill="#777"/></svg>
<svg style="position:absolute;left:775.80px;top:372.20px" width="6.6" height="3.3" viewBox="0 0 10 5"><path d="M0 0 H10 L5 5Z" fill="#777"/></svg>
<div style="position:absolute;left:55.60px;top:401.90px;width:1082.20px;height:1.10px;background:#84a0bb"></div>
<div style="position:absolute;left:-386.90px;width:1000px;text-align:center;top:386.84px;font-size:11px;line-height:12.65px;color:#333;font-weight:normal;font-style:normal;white-space:pre;">CMT24-12</div>
<div style="position:absolute;left:174.20px;top:386.84px;font-size:11px;line-height:12.65px;color:#333;font-weight:normal;font-style:normal;white-space:pre;">Tech Equipment's</div>
<div style="position:absolute;left:429.30px;top:386.84px;font-size:11px;line-height:12.65px;color:#333;font-weight:normal;font-style:normal;white-space:pre;">Mouse</div>
<div style="position:absolute;left:226.00px;width:1000px;text-align:center;top:386.84px;font-size:11px;line-height:12.65px;color:#333;font-weight:normal;font-style:normal;white-space:pre;">Pieces</div>
<div style="position:absolute;left:341.30px;width:1000px;text-align:center;top:386.84px;font-size:11px;line-height:12.65px;color:#333;font-weight:normal;font-style:normal;white-space:pre;">22</div>
<div style="position:absolute;left:898.00px;top:386.84px;font-size:11px;line-height:12.65px;color:#333;font-weight:normal;font-style:normal;white-space:pre;letter-spacing:0.22px;">Item discontinued</div>
<svg style="position:absolute;left:413.30px;top:391.40px" width="6.6" height="3.3" viewBox="0 0 10 5"><path d="M0 0 H10 L5 5Z" fill="#777"/></svg>
<svg style="position:absolute;left:668.20px;top:391.40px" width="6.6" height="3.3" viewBox="0 0 10 5"><path d="M0 0 H10 L5 5Z" fill="#777"/></svg>
<svg style="position:absolute;left:775.80px;top:391.40px" width="6.6" height="3.3" viewBox="0 0 10 5"><path d="M0 0 H10 L5 5Z" fill="#777"/></svg>
<div style="position:absolute;left:55.60px;top:421.10px;width:1082.20px;height:1.10px;background:#84a0bb"></div>
<div style="position:absolute;left:-386.90px;width:1000px;text-align:center;top:406.04px;font-size:11px;line-height:12.65px;color:#333;font-weight:normal;font-style:normal;white-space:pre;">CMT24-13</div>
<div style="position:absolute;left:174.20px;top:406.04px;font-size:11px;line-height:12.65px;color:#333;font-weight:normal;font-style:normal;white-space:pre;">Tech Equipment's</div>
<div style="position:absolute;left:429.30px;top:406.04px;font-size:11px;line-height:12.65px;color:#333;font-weight:normal;font-style:normal;white-space:pre;">Printer</div>
<div style="position:absolute;left:226.00px;width:1000px;text-align:center;top:406.04px;font-size:11px;line-height:12.65px;color:#333;font-weight:normal;font-style:normal;white-space:pre;">Pieces</div>
<div style="position:absolute;left:341.30px;width:1000px;text-align:center;top:406.04px;font-size:11px;line-height:12.65px;color:#333;font-weight:normal;font-style:normal;white-space:pre;">65</div>
<svg style="position:absolute;left:413.30px;top:410.60px" width="6.6" height="3.3" viewBox="0 0 10 5"><path d="M0 0 H10 L5 5Z" fill="#777"/></svg>
<svg style="position:absolute;left:668.20px;top:410.60px" width="6.6" height="3.3" viewBox="0 0 10 5"><path d="M0 0 H10 L5 5Z" fill="#777"/></svg>
<svg style="position:absolute;left:775.80px;top:410.60px" width="6.6" height="3.3" viewBox="0 0 10 5"><path d="M0 0 H10 L5 5Z" fill="#777"/></svg>
<div style="position:absolute;left:55.60px;top:440.30px;width:1082.20px;height:1.10px;background:#84a0bb"></div>
<div style="position:absolute;left:-386.90px;width:1000px;text-align:center;top:425.24px;font-size:11px;line-height:12.65px;color:#333;font-weight:normal;font-style:normal;white-space:pre;">A24789-14</div>
<div style="position:absolute;left:174.20px;top:425.24px;font-size:11px;line-height:12.65px;color:#333;font-weight:normal;font-style:normal;white-space:pre;">Domestic appliance</div>
<div style="position:absolute;left:429.30px;top:425.24px;font-size:11px;line-height:12.65px;color:#333;font-weight:normal;font-style:normal;white-space:pre;">Dish washer</div>
<div style="position:absolute;left:226.00px;width:1000px;text-align:center;top:425.24px;font-size:11px;line-height:12.65px;color:#333;font-weight:normal;font-style:normal;white-space:pre;">Pieces</div>
<div style="position:absolute;left:341.30px;width:1000px;text-align:center;top:425.24px;font-size:11px;line-height:12.65px;color:#333;font-weight:normal;font-style:normal;white-space:pre;">20</div>
<svg style="position:absolute;left:413.30px;top:429.80px" width="6.6" height="3.3" viewBox="0 0 10 5"><path d="M0 0 H10 L5 5Z" fill="#777"/></svg>
<svg style="position:absolute;left:668.20px;top:429.80px" width="6.6" height="3.3" viewBox="0 0 10 5"><path d="M0 0 H10 L5 5Z" fill="#777"/></svg>
<svg style="position:absolute;left:775.80px;top:429.80px" width="6.6" height="3.3" viewBox="0 0 10 5"><path d="M0 0 H10 L5 5Z" fill="#777"/></svg>
<div style="position:absolute;left:55.60px;top:459.50px;width:1082.20px;height:1.10px;background:#84a0bb"></div>
<div style="position:absolute;left:-386.90px;width:1000px;text-align:center;top:444.44px;font-size:11px;line-height:12.65px;color:#333;font-weight:normal;font-style:normal;white-space:pre;">SPK9-15</div>
<div style="position:absolute;left:174.20px;top:444.44px;font-size:11px;line-height:12.65px;color:#333;font-weight:normal;font-style:normal;white-space:pre;">Tech Equipment's</div>
<div style="position:absolute;left:429.30px;top:444.44px;font-size:11px;line-height:12.65px;color:#333;font-weight:normal;font-style:normal;white-space:pre;">Speaker</div>
<div style="position:absolute;left:226.00px;width:1000px;text-align:center;top:444.44px;font-size:11px;line-height:12.65px;color:#333;font-weight:normal;font-style:normal;white-space:pre;">Pieces</div>
<div style="position:absolute;left:341.30px;width:1000px;text-align:center;top:444.44px;font-size:11px;line-height:12.65px;color:#333;font-weight:normal;font-style:normal;white-space:pre;">38</div>
<svg style="position:absolute;left:413.30px;top:449.00px" width="6.6" height="3.3" viewBox="0 0 10 5"><path d="M0 0 H10 L5 5Z" fill="#777"/></svg>
<svg style="position:absolute;left:668.20px;top:449.00px" width="6.6" height="3.3" viewBox="0 0 10 5"><path d="M0 0 H10 L5 5Z" fill="#777"/></svg>
<svg style="position:absolute;left:775.80px;top:449.00px" width="6.6" height="3.3" viewBox="0 0 10 5"><path d="M0 0 H10 L5 5Z" fill="#777"/></svg>
<div style="position:absolute;left:55.60px;top:477.00px;width:1082.20px;height:1.10px;background:#84a0bb"></div>
<svg style="position:absolute;left:413.30px;top:467.35px" width="6.6" height="3.3" viewBox="0 0 10 5"><path d="M0 0 H10 L5 5Z" fill="#777"/></svg>
<svg style="position:absolute;left:668.20px;top:467.35px" width="6.6" height="3.3" viewBox="0 0 10 5"><path d="M0 0 H10 L5 5Z" fill="#777"/></svg>
<svg style="position:absolute;left:775.80px;top:467.35px" width="6.6" height="3.3" viewBox="0 0 10 5"><path d="M0 0 H10 L5 5Z" fill="#777"/></svg>
<div style="position:absolute;left:55.60px;top:494.50px;width:1082.20px;height:1.10px;background:#84a0bb"></div>
<svg style="position:absolute;left:413.30px;top:484.85px" width="6.6" height="3.3" viewBox="0 0 10 5"><path d="M0 0 H10 L5 5Z" fill="#777"/></svg>
<svg style="position:absolute;left:668.20px;top:484.85px" width="6.6" height="3.3" viewBox="0 0 10 5"><path d="M0 0 H10 L5 5Z" fill="#777"/></svg>
<svg style="position:absolute;left:775.80px;top:484.85px" width="6.6" height="3.3" viewBox="0 0 10 5"><path d="M0 0 H10 L5 5Z" fill="#777"/></svg>
<div style="position:absolute;left:55.60px;top:512.00px;width:1082.20px;height:1.10px;background:#84a0bb"></div>
<svg style="position:absolute;left:413.30px;top:502.35px" width="6.6" height="3.3" viewBox="0 0 10 5"><path d="M0 0 H10 L5 5Z" fill="#777"/></svg>
<svg style="position:absolute;left:668.20px;top:502.35px" width="6.6" height="3.3" viewBox="0 0 10 5"><path d="M0 0 H10 L5 5Z" fill="#777"/></svg>
<svg style="position:absolute;left:775.80px;top:502.35px" width="6.6" height="3.3" viewBox="0 0 10 5"><path d="M0 0 H10 L5 5Z" fill="#777"/></svg>
<div style="position:absolute;left:55.60px;top:529.50px;width:1082.20px;height:1.10px;background:#84a0bb"></div>
<svg style="position:absolute;left:413.30px;top:519.85px" width="6.6" height="3.3" viewBox="0 0 10 5"><path d="M0 0 H10 L5 5Z" fill="#777"/></svg>
<svg style="position:absolute;left:668.20px;top:519.85px" width="6.6" height="3.3" viewBox="0 0 10 5"><path d="M0 0 H10 L5 5Z" fill="#777"/></svg>
<svg style="position:absolute;left:775.80px;top:519.85px" width="6.6" height="3.3" viewBox="0 0 10 5"><path d="M0 0 H10 L5 5Z" fill="#777"/></svg>
<div style="position:absolute;left:55.60px;top:547.00px;width:1082.20px;height:1.10px;background:#84a0bb"></div>
<svg style="position:absolute;left:413.30px;top:537.35px" width="6.6" height="3.3" viewBox="0 0 10 5"><path d="M0 0 H10 L5 5Z" fill="#777"/></svg>
<svg style="position:absolute;left:668.20px;top:537.35px" width="6.6" height="3.3" viewBox="0 0 10 5"><path d="M0 0 H10 L5 5Z" fill="#777"/></svg>
<svg style="position:absolute;left:775.80px;top:537.35px" width="6.6" height="3.3" viewBox="0 0 10 5"><path d="M0 0 H10 L5 5Z" fill="#777"/></svg>
<div style="position:absolute;left:55.60px;top:564.50px;width:1082.20px;height:1.10px;background:#84a0bb"></div>
<svg style="position:absolute;left:413.30px;top:554.85px" width="6.6" height="3.3" viewBox="0 0 10 5"><path d="M0 0 H10 L5 5Z" fill="#777"/></svg>
<svg style="position:absolute;left:668.20px;top:554.85px" width="6.6" height="3.3" viewBox="0 0 10 5"><path d="M0 0 H10 L5 5Z" fill="#777"/></svg>
<svg style="position:absolute;left:775.80px;top:554.85px" width="6.6" height="3.3" viewBox="0 0 10 5"><path d="M0 0 H10 L5 5Z" fill="#777"/></svg>
<div style="position:absolute;left:55.60px;top:582.00px;width:1082.20px;height:1.10px;background:#84a0bb"></div>
<svg style="position:absolute;left:413.30px;top:572.35px" width="6.6" height="3.3" viewBox="0 0 10 5"><path d="M0 0 H10 L5 5Z" fill="#777"/></svg>
<svg style="position:absolute;left:668.20px;top:572.35px" width="6.6" height="3.3" viewBox="0 0 10 5"><path d="M0 0 H10 L5 5Z" fill="#777"/></svg>
<svg style="position:absolute;left:775.80px;top:572.35px" width="6.6" height="3.3" viewBox="0 0 10 5"><path d="M0 0 H10 L5 5Z" fill="#777"/></svg>
<div style="position:absolute;left:55.60px;top:599.50px;width:1082.20px;height:1.10px;background:#84a0bb"></div>
<svg style="position:absolute;left:413.30px;top:589.85px" width="6.6" height="3.3" viewBox="0 0 10 5"><path d="M0 0 H10 L5 5Z" fill="#777"/></svg>
<svg style="position:absolute;left:668.20px;top:589.85px" width="6.6" height="3.3" viewBox="0 0 10 5"><path d="M0 0 H10 L5 5Z" fill="#777"/></svg>
<svg style="position:absolute;left:775.80px;top:589.85px" width="6.6" height="3.3" viewBox="0 0 10 5"><path d="M0 0 H10 L5 5Z" fill="#777"/></svg>
<div style="position:absolute;left:170.00px;top:191.20px;width:1.00px;height:393.80px;background:#7ea3c8"></div>
<div style="position:absolute;left:425.00px;top:191.20px;width:1.00px;height:393.80px;background:#6f8cab"></div>
<div style="position:absolute;left:680.00px;top:191.20px;width:1.00px;height:393.80px;background:#6a8aab"></div>
<div style="position:absolute;left:787.00px;top:191.20px;width:1.00px;height:393.80px;background:#9db3c6"></div>
<div style="position:absolute;left:788.00px;top:191.20px;width:1.00px;height:393.80px;background:#c9d6e0"></div>
<div style="position:absolute;left:894.00px;top:191.20px;width:1.00px;height:393.80px;background:#c4d6e8"></div>
<div style="position:absolute;left:895.00px;top:191.20px;width:1.00px;height:393.80px;background:#94b3d3"></div>
<div style="position:absolute;left:54.90px;top:160.00px;width:1.30px;height:425.00px;background:#3f7f57"></div>
<div style="position:absolute;left:1137.20px;top:160.00px;width:1.20px;height:425.00px;background:#3f7f57"></div>
<div style="position:absolute;left:38.20px;top:187.80px;width:1099.80px;height:3.40px;background:#dcdfe5"></div>
</body></html>
